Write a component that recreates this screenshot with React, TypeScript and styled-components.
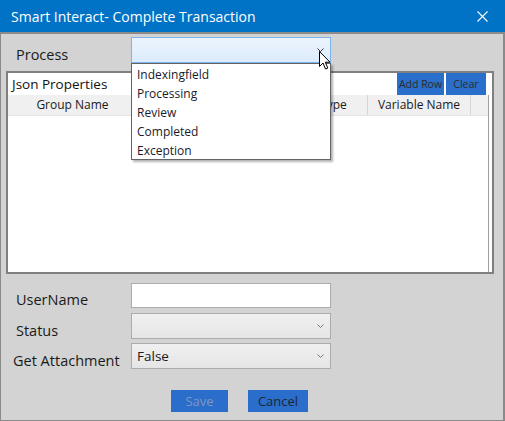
import { FC } from 'react'
import styled, { createGlobalStyle } from 'styled-components'

const GlobalStyle = createGlobalStyle`
  html, body {
    margin: 0;
    padding: 0;
    background: #d3d3d3;
  }
  body {
    font-family: 'Open Sans', 'Noto Sans', sans-serif;
    color: #1a1a1a;
  }
`

const Window = styled.div`
  width: 505px;
  height: 421px;
  display: flex;
  flex-direction: column;
  box-sizing: border-box;
`

const TitleBar = styled.div`
  height: 32px;
  flex: none;
  background: #0173c6;
  display: flex;
  align-items: center;
  justify-content: space-between;
  padding: 0 17px 0 11px;
`

const Title = styled.span`
  color: #ffffff;
  font-size: 14px;
`

const Body = styled.div`
  flex: 1;
  background: #d3d3d3;
  border: 1px solid #8a8a8a;
  border-right-width: 2px;
  border-top-width: 2px;
  display: flex;
  flex-direction: column;
  padding-top: 3px;
`

const FieldRow = styled.div<{ $top: number }>`
  display: grid;
  grid-template-columns: 130px 200px;
  align-items: center;
  margin-top: ${p => p.$top}px;
`

const Label = styled.label<{ $indent?: number }>`
  font-size: 14.5px;
  line-height: 16px;
  padding-left: ${p => p.$indent ?? 15}px;
  padding-top: 9px;
  white-space: nowrap;
`

const ComboWrap = styled.div`
  position: relative;
`

const Combo = styled.div<{ $active?: boolean }>`
  box-sizing: border-box;
  height: 26px;
  display: flex;
  align-items: center;
  justify-content: space-between;
  padding: 0 6px 0 5px;
  font-size: 13.5px;
  border: 1px solid ${p => (p.$active ? '#7eb4ea' : '#acacac')};
  background: ${p =>
    p.$active
      ? 'linear-gradient(#ecf4fc, #dcecfc)'
      : 'linear-gradient(#f0f0f0, #e5e5e5)'};
`

const TextBox = styled.div`
  box-sizing: border-box;
  height: 25px;
  background: #ffffff;
  border: 1px solid #acacac;
`

const Chevron: FC<{ color?: string }> = ({ color = '#555' }) => (
  <svg width="7" height="5" viewBox="0 0 7 5">
    <path d="M0.5 0.5 L3.5 3.5 L6.5 0.5" stroke={color} strokeWidth="1" fill="none" />
  </svg>
)

const DropList = styled.ul`
  position: absolute;
  top: 100%;
  left: 0;
  width: 200px;
  height: 97px;
  box-sizing: border-box;
  margin: 0;
  padding: 1px 0 0;
  list-style: none;
  background: #ffffff;
  border: 1px solid #646464;
  box-shadow: 2px 2px 2px rgba(0, 0, 0, 0.3);
  z-index: 5;
`

const DropItem = styled.li`
  height: 19px;
  line-height: 19px;
  padding-left: 5px;
  font-size: 12px;
  color: #1a1a2a;
`

const Cursor = styled.svg`
  position: absolute;
  left: 188px;
  top: 14px;
  z-index: 6;
`

const GridPanel = styled.div`
  margin: 8px 0 0 5px;
  width: 488px;
  height: 203px;
  box-sizing: border-box;
  border: 2px solid #808080;
  background: #ffffff;
  display: flex;
  flex-direction: column;
`

const PanelHeader = styled.div`
  height: 22px;
  display: flex;
  align-items: center;
  justify-content: space-between;
  padding: 0 6px 0 4px;
`

const PanelTitle = styled.span`
  font-size: 13.5px;
  color: #111;
`

const ButtonGroup = styled.div`
  display: flex;
  gap: 2px;
  align-self: stretch;
`

const SmallButton = styled.button<{ $w: number }>`
  width: ${p => p.$w}px;
  height: 22px;
  border: none;
  background: #2a6fcb;
  color: #2b2b2b;
  font-family: inherit;
  font-size: 10.5px;
  padding: 0;
`

const GridArea = styled.div`
  flex: 1;
  display: flex;
`

const Table = styled.div`
  width: 480px;
  border-right: 1px solid #a0a0a0;
`

const HeaderRow = styled.div`
  display: flex;
  height: 20px;
  background: #f0f0f0;
  border-bottom: 1px solid #e3e3e3;
`

const HeaderCell = styled.div<{ $w: number; $flex?: boolean }>`
  width: ${p => p.$w}px;
  flex: ${p => (p.$flex ? 1 : 'none')};
  box-sizing: border-box;
  border-right: ${p => (p.$flex ? 'none' : '1px solid #d6d6d6')};
  font-size: 12px;
  text-align: center;
  line-height: 20px;
  white-space: nowrap;
  overflow: hidden;
`

const ActionRow = styled.div`
  display: flex;
  gap: 20px;
  margin: 21px 0 0 170px;
`

const ActionButton = styled.button<{ $w: number; $disabled?: boolean }>`
  width: ${p => p.$w}px;
  height: 22px;
  border: none;
  padding: 0;
  background: #2a6dca;
  color: ${p => (p.$disabled ? '#7f98c2' : '#1d2636')};
  font-family: inherit;
  font-size: 13px;
`

const processes = ['Indexingfield', 'Processing', 'Review', 'Completed', 'Exception']

const App: FC = () => (
  <>
    <GlobalStyle />
    <Window>
      <TitleBar>
        <Title>Smart Interact- Complete Transaction</Title>
        <svg width="11" height="11" viewBox="0 0 11 11">
          <path d="M0.5 0.5 L10.5 10.5 M10.5 0.5 L0.5 10.5" stroke="#ffffff" strokeWidth="1.1" />
        </svg>
      </TitleBar>
      <Body>
        <FieldRow $top={0}>
          <Label>Process</Label>
          <ComboWrap>
            <Combo $active>
              <span />
              <Chevron color="#333" />
            </Combo>
            <DropList>
              {processes.map(p => (
                <DropItem key={p}>{p}</DropItem>
              ))}
            </DropList>
            <Cursor width="13" height="20" viewBox="0 0 13 20">
              <path
                d="M0.5 0.5 L0.5 15.5 L4 12 L6.5 18 L8.8 17 L6.3 11.2 L11 11.2 Z"
                fill="#ffffff"
                stroke="#000000"
                strokeWidth="1"
              />
            </Cursor>
          </ComboWrap>
        </FieldRow>

        <GridPanel>
          <PanelHeader>
            <PanelTitle>Json Properties</PanelTitle>
            <ButtonGroup>
              <SmallButton $w={47}>Add Row</SmallButton>
              <SmallButton $w={40}>Clear</SmallButton>
            </ButtonGroup>
          </PanelHeader>
          <GridArea>
            <Table>
              <HeaderRow>
                <HeaderCell $w={130}>Group Name</HeaderCell>
                <HeaderCell $w={162} />
                <HeaderCell $w={68}>Type</HeaderCell>
                <HeaderCell $w={103}>Variable Name</HeaderCell>
                <HeaderCell $w={16} $flex />
              </HeaderRow>
            </Table>
          </GridArea>
        </GridPanel>

        <FieldRow $top={9}>
          <Label>UserName</Label>
          <TextBox />
        </FieldRow>
        <FieldRow $top={5}>
          <Label>Status</Label>
          <Combo>
            <span />
            <Chevron color="#777" />
          </Combo>
        </FieldRow>
        <FieldRow $top={4}>
          <Label $indent={12}>Get Attachment</Label>
          <Combo>
            <span>False</span>
            <Chevron color="#777" />
          </Combo>
        </FieldRow>

        <ActionRow>
          <ActionButton $w={57} $disabled>
            Save
          </ActionButton>
          <ActionButton $w={60}>Cancel</ActionButton>
        </ActionRow>
      </Body>
    </Window>
  </>
)

export default App
